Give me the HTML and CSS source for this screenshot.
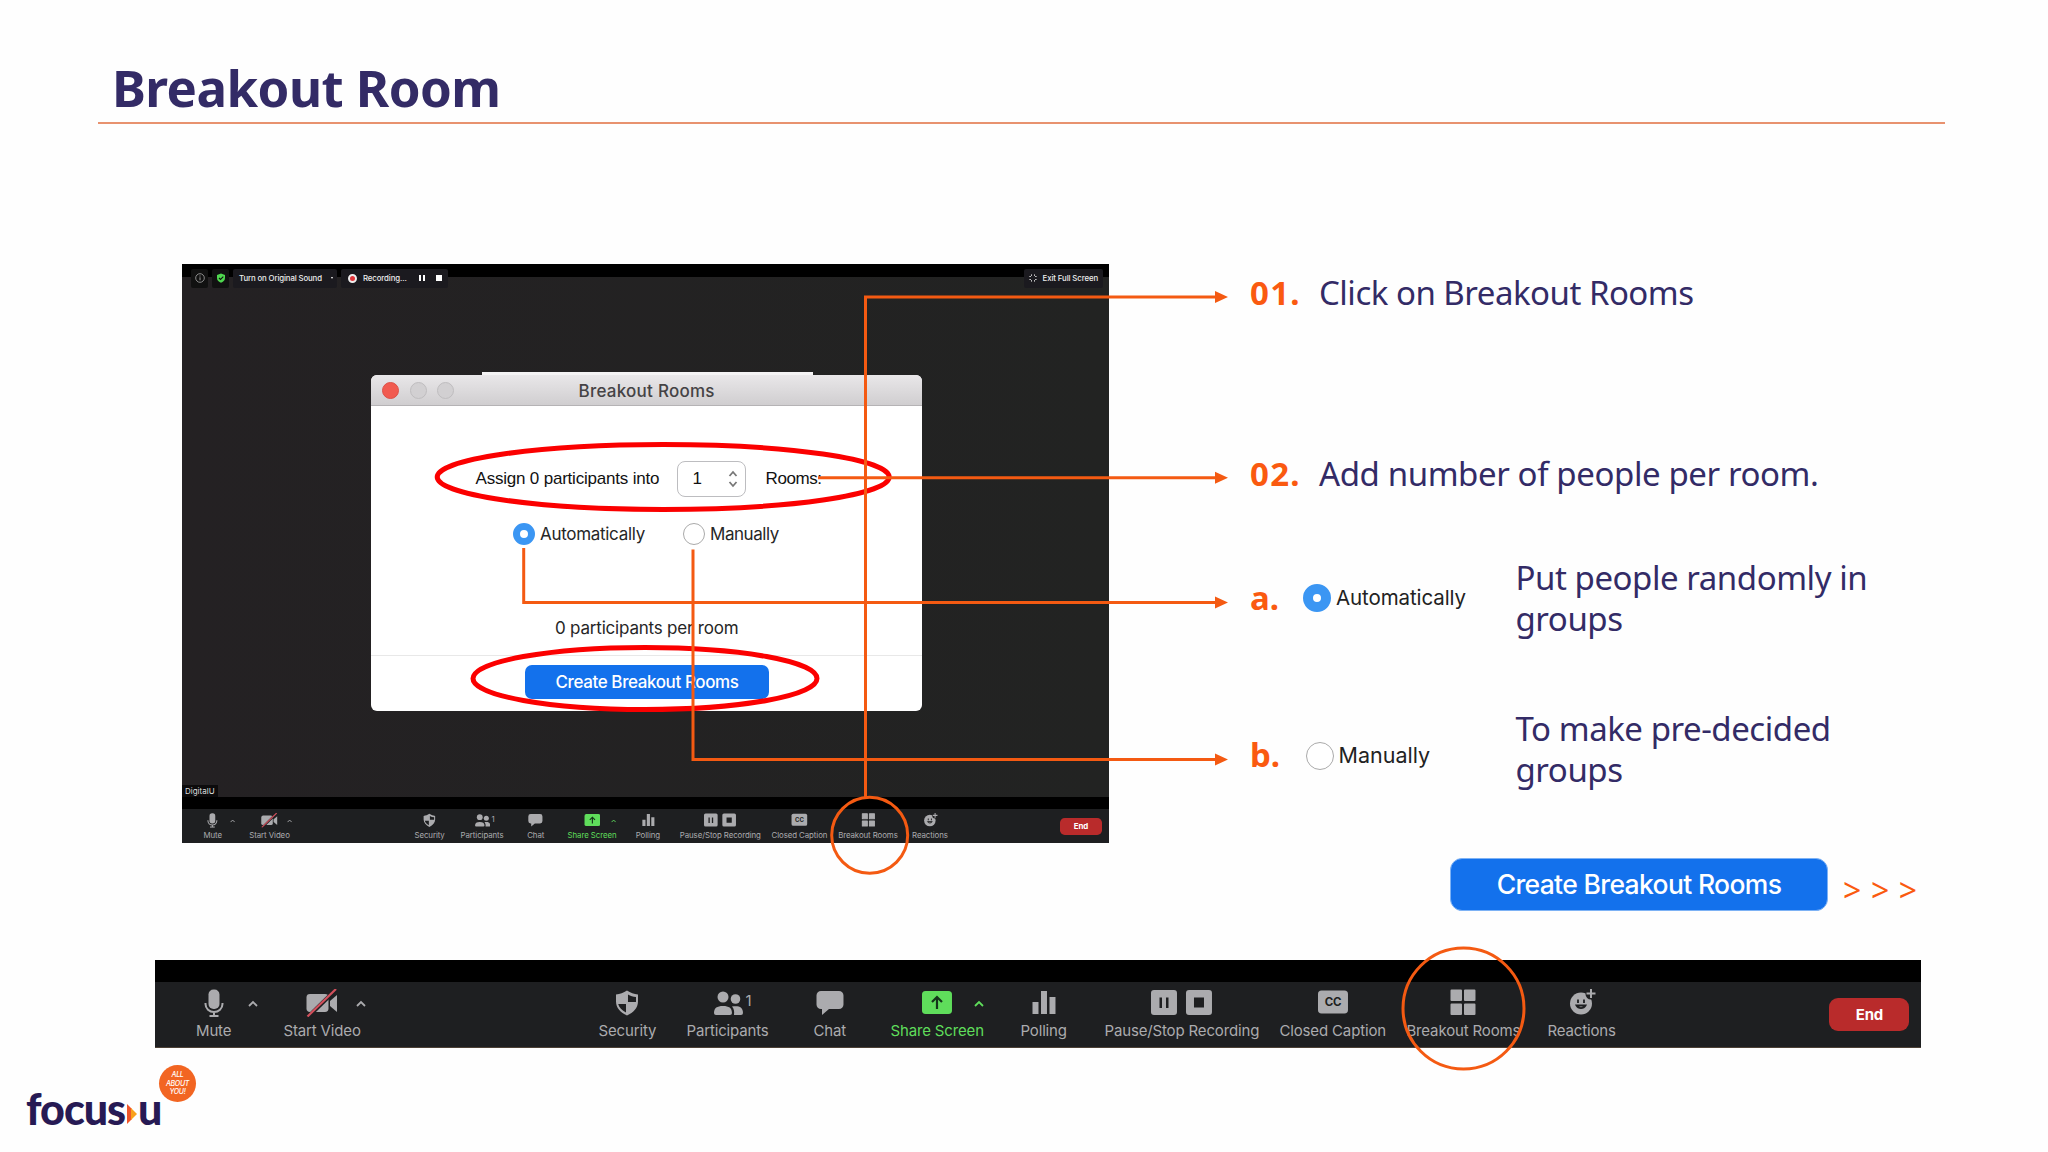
FILE: index.html
```
<!DOCTYPE html>
<html lang="en">
<head>
  <meta charset="UTF-8" />
  <title>Breakout Room</title>
  <link rel="stylesheet" href="styles.css">
</head>
<body>

<!-- Icon set shared by both toolbars -->
<svg class="icon-defs">
  <symbol id="mic" viewBox="0 0 32 28">
    <rect x="10.5" y="0.5" width="11" height="19.5" rx="5" fill="currentColor"/>
    <path d="M7.5 14v1a8.5 8 0 0 0 17 0v-1M16 23v4M11.5 27h9" fill="none" stroke="currentColor" stroke-width="2"/>
  </symbol>
  <symbol id="video" viewBox="0 0 32 28">
    <rect x="0.5" y="5" width="22" height="18" rx="3.5" fill="currentColor"/>
    <path d="M24 12l7-6v17l-7-6z" fill="currentColor"/>
    <path d="M2 28L30.5 0" stroke="#1e1f21" stroke-width="4"/>
    <path d="M1.5 27.5L30 0" stroke="#d2505c" stroke-width="2.2"/>
  </symbol>
  <symbol id="shield" viewBox="0 0 32 28">
    <path d="M16 1.5c3.5 2.5 7 3.5 11 4v7c0 6.5-4.5 11-11 14-6.5-3-11-7.5-11-14v-7c4-.5 7.500-1.5 11-4z" fill="currentColor"/>
    <path d="M17 5.500c2.500 1.500 5 2.200 8 2.600V13h-8zM15 15v8.500c-4-2-7-5-7.800-8.500z" fill="#1e1f21"/>
  </symbol>
  <symbol id="people" viewBox="0 0 32 28">
    <circle cx="11" cy="8" r="5.500" fill="currentColor"/>
    <circle cx="23.500" cy="10" r="4.800" fill="currentColor"/>
    <path d="M2 24c0-5 3-7 9-7s9 2 9 7q0 2-2 2H4Q2 26 2 24zM20 17.500c7-1 11 .5 11 6.500q0 2-2 2h-7c.5-4 0-6-2-8.500z" fill="currentColor"/>
  </symbol>
  <symbol id="chat" viewBox="0 0 32 28">
    <path d="M7 2h18a4.500 4.500 0 0 1 4.500 4.500v9A4.500 4.500 0 0 1 25 20H15l-7 6v-6H7a4.500 4.500 0 0 1-4.500-4.500v-9A4.500 4.500 0 0 1 7 2z" fill="currentColor"/>
  </symbol>
  <symbol id="share" viewBox="0 0 32 28">
    <rect x="1" y="2" width="30" height="23" rx="3.500" fill="#5fdd5b"/>
    <path d="M16 20V8M11 13l5-5 5 5" fill="none" stroke="#14351a" stroke-width="2.200"/>
  </symbol>
  <symbol id="bars" viewBox="0 0 32 28">
    <path d="M4.500 13h6v12h-6zM13 2h6v23h-6zM21.500 8h6v17h-6z" fill="currentColor"/>
  </symbol>
  <symbol id="record" viewBox="0 0 62 28">
    <rect x="0" y="1" width="26" height="25" rx="3" fill="currentColor"/>
    <rect x="35" y="1" width="26" height="25" rx="3" fill="currentColor"/>
    <path d="M8.500 8.500h2.500v10.500H8.500zM15 8.500h2.500v10.500H15zM43 8.500h10v10H43z" fill="#1e1f21"/>
  </symbol>
  <symbol id="cc" viewBox="0 0 32 28">
    <rect x="1" y="1.500" width="30" height="23" rx="3.500" fill="currentColor"/>
    <text x="16" y="17.500" text-anchor="middle" class="cc-text">CC</text>
  </symbol>
  <symbol id="grid" viewBox="0 0 32 28">
    <path d="M4.500 1.500h9.500v9.500h-9.500zM18 1.500h9.500v9.500H18zM4.500 15.500h9.500v9.500h-9.500zM18 15.500h9.500v9.500H18z" fill="currentColor" stroke="currentColor" stroke-width="2" stroke-linejoin="round"/>
  </symbol>
  <symbol id="smile" viewBox="0 0 32 28">
    <circle cx="15" cy="14.500" r="11" fill="currentColor"/>
    <circle cx="25" cy="5" r="5.500" fill="#1e1f21"/>
    <path d="M25 0v9M20.500 4.500h9" stroke="currentColor" stroke-width="2"/>
    <path d="M12 10.500v3.500M18 10.500v3.500M10.500 16.500a5 4.500 0 0 0 9 0z" fill="none" stroke="#1e1f21" stroke-width="1.800"/>
  </symbol>
  <symbol id="caret" viewBox="0 0 10 7">
    <path d="M1 6l4-4 4 4" fill="none" stroke="currentColor" stroke-width="1.800"/>
  </symbol>
</svg>

<div class="slide">
  <header class="title-bar">
    <h1>Breakout Room</h1>
  </header>

  <main class="content">
    <section class="screen">
      <div class="screen-top">
        <span class="chip chip-icon">
          <svg viewBox="0 0 10 10"><circle cx="5" cy="5" r="4.300" fill="none" stroke="#aaa" stroke-width=".8"/><path d="M5 4.300v3M5 2.500v1" stroke="#aaa" stroke-width=".9"/></svg>
        </span>
        <span class="chip chip-icon">
          <svg viewBox="0 0 10 10"><path d="M5 .5l4 1.400v3C9 7.300 7 9 5 9.700 3 9 1 7.300 1 4.900v-3z" fill="#4fd84f"/><path d="M3 5l1.500 1.500L7.300 3.700" fill="none" stroke="#111" stroke-width="1.100"/></svg>
        </span>
        <span class="chip chip-sound">Turn on Original Sound <i class="drop"></i></span>
        <span class="chip chip-rec"><i class="rec-dot"></i> Recording... <i class="pause"></i><i class="stop"></i></span>
        <span class="chip exit">
          <svg viewBox="0 0 8 8"><path d="M.3 2.500h1.700M2.500 .3v1.700M6 2.500h1.700M5.500 .3v1.700M.3 5.500h1.700M2.500 6v1.700M6 5.500h1.700M5.500 6v1.700" fill="none" stroke="#ccc" stroke-width=".9"/></svg>
          Exit Full Screen
        </span>
      </div>

      <div class="stage">
        <div class="dialog">
          <div class="dialog-bar">
            <span class="light red"></span><span class="light"></span><span class="light"></span>
            <span class="dialog-title">Breakout Rooms</span>
          </div>
          <div class="assign">
            <span class="assign-text">Assign 0 participants into</span>
            <span class="stepper">1
              <svg viewBox="0 0 10 18"><path d="M1.500 6L5 2l3.500 4M1.500 12L5 16l3.500-4" fill="none" stroke="#777" stroke-width="1.800"/></svg>
            </span>
            <span class="rooms-text">Rooms:</span>
          </div>
          <div class="choices">
            <span class="radio on"></span><span class="choice-auto">Automatically</span>
            <span class="radio"></span><span class="choice-manual">Manually</span>
          </div>
          <div class="per-room">0 participants per room</div>
          <div class="dialog-foot">
            <div class="create">Create Breakout Rooms</div>
          </div>
        </div>
        <span class="name-tag">DigitalU</span>
      </div>

      <div class="toolbar small">
        <div class="tool"><svg class="icon"><use href="#mic"/></svg>Mute<svg class="caret"><use href="#caret"/></svg></div>
        <div class="tool"><svg class="icon"><use href="#video"/></svg>Start Video<svg class="caret"><use href="#caret"/></svg></div>
        <div class="tool"><svg class="icon"><use href="#shield"/></svg>Security</div>
        <div class="tool"><svg class="icon"><use href="#people"/></svg>Participants<span class="count">1</span></div>
        <div class="tool"><svg class="icon"><use href="#chat"/></svg>Chat</div>
        <div class="tool green"><svg class="icon"><use href="#share"/></svg>Share Screen<svg class="caret"><use href="#caret"/></svg></div>
        <div class="tool"><svg class="icon"><use href="#bars"/></svg>Polling</div>
        <div class="tool"><svg class="icon wide"><use href="#record"/></svg>Pause/Stop Recording</div>
        <div class="tool"><svg class="icon"><use href="#cc"/></svg>Closed Caption</div>
        <div class="tool"><svg class="icon"><use href="#grid"/></svg>Breakout Rooms</div>
        <div class="tool"><svg class="icon"><use href="#smile"/></svg>Reactions</div>
        <div class="end">End</div>
      </div>
    </section>

    <section class="steps">
      <div class="step first"><b>01.</b><span class="click">Click on Breakout Rooms</span></div>
      <div class="step second"><b>02.</b><span class="add">Add number of people per room.</span></div>
      <div class="option opt-a">
        <b>a.</b>
        <div class="option-pick"><span class="radio on"></span>Automatically</div>
        <p>Put people randomly in groups</p>
      </div>
      <div class="option opt-b">
        <b>b.</b>
        <div class="option-pick"><span class="radio"></span>Manually</div>
        <p>To make pre-decided groups</p>
      </div>
      <div class="finish">
        <div class="create-big">Create Breakout Rooms</div>
        <span class="more">&gt; &gt; &gt;</span>
      </div>
    </section>
  </main>

  <div class="toolbar large">
    <div class="tool"><svg class="icon"><use href="#mic"/></svg>Mute<svg class="caret"><use href="#caret"/></svg></div>
    <div class="tool"><svg class="icon"><use href="#video"/></svg>Start Video<svg class="caret"><use href="#caret"/></svg></div>
    <div class="tool"><svg class="icon"><use href="#shield"/></svg>Security</div>
    <div class="tool"><svg class="icon"><use href="#people"/></svg>Participants<span class="count">1</span></div>
    <div class="tool"><svg class="icon"><use href="#chat"/></svg>Chat</div>
    <div class="tool green"><svg class="icon"><use href="#share"/></svg>Share Screen<svg class="caret"><use href="#caret"/></svg></div>
    <div class="tool"><svg class="icon"><use href="#bars"/></svg>Polling</div>
    <div class="tool"><svg class="icon wide"><use href="#record"/></svg>Pause/Stop Recording</div>
    <div class="tool"><svg class="icon"><use href="#cc"/></svg>Closed Caption</div>
    <div class="tool"><svg class="icon"><use href="#grid"/></svg>Breakout Rooms</div>
    <div class="tool"><svg class="icon"><use href="#smile"/></svg>Reactions</div>
    <div class="end">End</div>
  </div>

  <footer class="logo">
    <span>focus</span>
    <svg class="play" viewBox="0 0 10 20"><path d="M0 0l5 5v10l-5 5z" fill="#f0562a"/><path d="M4 4l6 6-6 6z" fill="#f9a11b"/></svg>
    <span>u</span>
    <div class="badge">ALL<br>ABOUT<br>YOU!</div>
  </footer>

  <!-- Callout arrows, rings and circles drawn over the slide -->
  <svg class="callouts" viewBox="0 0 2048 1152">
    <g fill="none" stroke="#fb0000" stroke-width="5">
      <ellipse cx="663.200" cy="477" rx="226" ry="32.500"/>
      <ellipse cx="645" cy="678.500" rx="172" ry="31"/>
    </g>
    <g fill="none" stroke="#f45a12" stroke-width="3">
      <path d="M865.500 797V297H1217"/>
      <path d="M818 477.700H1217"/>
      <path d="M523.700 548V602.500H1217"/>
      <path d="M693 549.500V759.500H1217"/>
      <circle cx="869.700" cy="835.300" r="38"/>
      <circle cx="1463.500" cy="1008.500" r="60.500"/>
    </g>
    <path fill="#f45a12" d="M1215 291l13 6-13 6zM1215 471.700l13 6-13 6zM1215 596.500l13 6-13 6zM1215 753.500l13 6-13 6z"/>
  </svg>
</div>

</body>
</html>
```
FILE: styles.css
```
* {
  box-sizing: border-box;
}

html, body {
  margin: 0;
  padding: 0;
  overflow: hidden;
  background: #fefefe;
}

.icon-defs {
  display: none;
}

.slide {
  position: relative;
  display: flex;
  flex-direction: column;
  width: 2048px;
  height: 1152px;
  font-family: "Noto Sans", "Open Sans", sans-serif;
  color: #332b66;
}

.title-bar {
  width: 1847px;
  height: 124px;
  margin-left: 98px;
  padding: 53px 0 0 14px;
  border-bottom: 2px solid #e8926f;
}

h1 {
  margin: 0;
  font-size: 51px;
  line-height: 68px;
  letter-spacing: -0.55px;
}

.content {
  display: flex;
  align-items: flex-start;
  height: 647px;
  margin: 140px 0 49px 182px;
}

/* ---- Meeting screenshot ---- */
.screen {
  display: flex;
  flex-direction: column;
  width: 927px;
  height: 579px;
  background: linear-gradient(90deg, #242123, #222322);
  font-family: Inter, "Liberation Sans", sans-serif;
}

.screen-top {
  display: flex;
  align-items: center;
  gap: 4px;
  height: 24px;
  padding: 4px 6px 0 9px;
  background: linear-gradient(#000 13px, transparent 13px);
  color: #eee;
  font-size: 7.8px;
  font-weight: 500;
  white-space: nowrap;
}

.chip {
  display: flex;
  align-items: center;
  height: 19px;
  background: #1b1a1f;
  border-radius: 2px;
}

.chip-icon {
  width: 17px;
  justify-content: center;
  background: #111;
}

.chip-icon svg {
  width: 10px;
  height: 10px;
}

.chip-sound {
  width: 104px;
  padding: 0 4px 0 6px;
  justify-content: space-between;
  letter-spacing: -0.12px;
}

.drop {
  border: 1.5px solid transparent;
  border-top: 2px solid #fff;
}

.chip-rec {
  width: 107px;
  padding-left: 7px;
  letter-spacing: -0.1px;
}

.rec-dot {
  width: 9px;
  height: 9px;
  margin-right: 6px;
  background: #e2353a;
  border: 2.5px solid #eee;
  border-radius: 50%;
}

.pause {
  width: 6px;
  height: 6px;
  margin: 0 11px 0 12px;
  border: solid #fff;
  border-width: 0 2px;
}

.stop {
  width: 6px;
  height: 6px;
  background: #fff;
}

.exit {
  gap: 6px;
  margin-left: auto;
  padding: 0 5px;
  letter-spacing: -0.1px;
}

.exit svg {
  width: 8px;
  height: 8px;
}

.stage {
  display: flex;
  flex-direction: column;
  align-items: flex-start;
  justify-content: space-between;
  height: 509px;
  padding-top: 84px;
}

.dialog {
  position: relative;
  width: 551px;
  height: 336px;
  margin: 3px 0 0 189px;
  background: #fff;
  border-radius: 6px;
  color: #262626;
  font-size: 17px;
}

/* Edge of the window behind the dialog */
.dialog::before {
  content: "";
  position: absolute;
  top: -3px;
  left: 111px;
  width: 331px;
  height: 3px;
  background: #f4f3f4;
}

.dialog-bar {
  display: flex;
  align-items: center;
  gap: 10.5px;
  height: 31px;
  padding-left: 11px;
  background: linear-gradient(#e9e7e9, #d0ced0);
  border-bottom: 1px solid #b5b3b5;
  border-radius: 6px 6px 0 0;
}

.light {
  width: 17px;
  height: 17px;
  background: #d2d0d2;
  border: 1px solid #bfbdbf;
  border-radius: 50%;
}

.light.red {
  background: #f15b50;
  border-color: #dd5148;
}

.dialog-title {
  margin-left: 114px;
  padding-top: 1px;
  color: #454345;
  font-weight: 500;
  letter-spacing: 0.25px;
}

.assign {
  display: flex;
  align-items: center;
  height: 36px;
  margin: 55px 0 0 104.5px;
  font-family: "Liberation Sans", Arial, sans-serif;
  color: #111;
  white-space: nowrap;
}

.assign-text {
  width: 201px;
  letter-spacing: -0.2px;
}

.stepper {
  display: flex;
  align-items: center;
  justify-content: space-between;
  width: 69px;
  height: 36px;
  margin-right: 20px;
  padding: 0 7px 0 15px;
  border: 1.5px solid #bdbdc0;
  border-radius: 8px;
}

.stepper svg {
  width: 10px;
  height: 18px;
}

.rooms-text {
  letter-spacing: -0.4px;
}

.choices {
  display: flex;
  align-items: center;
  height: 24px;
  margin: 25px 0 0 142px;
  letter-spacing: -0.3px;
}

.radio {
  width: 22px;
  height: 22px;
  margin-right: 5px;
  background: #fff;
  border: 1.5px solid #aaa;
  border-radius: 50%;
}

.radio.on {
  border: 7.5px solid #3b96f3;
}

.choice-auto {
  width: 143px;
}

.choice-manual {
  letter-spacing: -0.45px;
}

.per-room {
  margin-top: 71px;
  height: 22px;
  line-height: 22px;
  padding-left: 184px;
  letter-spacing: -0.2px;
}

.dialog-foot {
  display: flex;
  height: 54px;
  margin-top: 16px;
  padding: 9px 0 0 154px;
  border-top: 1px solid #e8e8e8;
}

.create {
  width: 244px;
  height: 34px;
  background: #1371ec;
  border-radius: 7px;
  color: #fff;
  font-weight: 500;
  line-height: 34px;
  text-align: center;
  letter-spacing: -0.4px;
}

.name-tag {
  margin-bottom: -1px;
  padding: 1px 3px;
  background: #0c0b0c;
  color: #ddd;
  font-size: 8px;
  line-height: 11px;
}

/* ---- Toolbar, sized in em so it works at both scales ---- */
.toolbar {
  display: grid;
  grid-template-columns: 5.833em 21em 5.867em 8.467em 5.133em 8.667em 5.6em 11.667em 8.467em 9.4em 18.8em 5.333em;
  justify-items: start;
  align-items: start;
  width: 117.733em;
  height: 5.867em;
  padding: 1.933em 0 0 2.733em;
  background: linear-gradient(#000 1.467em, #1e1f21 1.467em);
  font-family: Inter, "Liberation Sans", sans-serif;
  color: #ababae;
  letter-spacing: -0.01em;
  white-space: nowrap;
}

.toolbar.large {
  flex-shrink: 0;
  margin-left: 155px;
  font-size: 15px;
  border-bottom: 1px solid #4d4136;
}

.toolbar.small {
  width: 927px;
  height: 46px;
  padding: 16px 0 0 21.4px;
  font-size: 7.866px;
}

.tool {
  position: relative;
  display: flex;
  flex-direction: column;
  align-items: center;
  gap: 0.36em;
  line-height: 1.2;
}

.tool.green {
  color: #5fdd5b;
}

.icon {
  width: 2.133em;
  height: 1.867em;
}

.icon.wide {
  width: 4.133em;
}

.cc-text {
  font: 700 11.5px Inter, sans-serif;
  fill: #1e1f21;
}

.caret {
  position: absolute;
  top: 0.75em;
  left: calc(50% + 2.267em);
  width: 0.667em;
  height: 0.467em;
}

.green .caret {
  left: calc(50% + 2.45em);
}

.count {
  position: absolute;
  top: 0.2em;
  left: calc(50% + 1.2em);
}

.end {
  width: 5.333em;
  height: 2.2em;
  margin-top: 0.6em;
  background: #b92b2b;
  border-radius: 0.6em;
  color: #fff;
  font-weight: 700;
  line-height: 2.2em;
  text-align: center;
}

/* ---- Steps ---- */
.steps {
  display: flex;
  flex-direction: column;
  width: 700px;
  margin-left: 141px;
  padding-top: 7.5px;
  font-size: 33px;
  line-height: 41.5px;
}

.steps b {
  color: #fa5a10;
}

.step {
  display: flex;
  white-space: nowrap;
}

.step b {
  width: 69px;
  letter-spacing: 1.3px;
}

.click {
  letter-spacing: -0.5px;
}

.add {
  letter-spacing: -0.4px;
}

.second {
  margin-top: 139.5px;
}

.option {
  display: grid;
  grid-template-columns: 53px 212.5px 380px;
  align-items: center;
}

.option p {
  margin: 0;
  letter-spacing: -0.45px;
}

.opt-a {
  margin-top: 62.5px;
}

.opt-b {
  margin-top: 68px;
}

.opt-b b {
  padding-top: 12px;
}

.option-pick {
  display: flex;
  align-items: center;
  font-family: Inter, "Liberation Sans", sans-serif;
  font-size: 20.5px;
  letter-spacing: -0.1px;
  color: #222;
}

.opt-a .option-pick {
  padding-bottom: 1px;
}

.option-pick .radio {
  width: 28px;
  height: 28px;
  margin-right: 5px;
}

.option-pick .radio.on {
  border-width: 10px;
}

.opt-b .option-pick {
  padding: 14px 0 0 2.5px;
  font-size: 21.5px;
  letter-spacing: 0;
}

.finish {
  display: flex;
  align-items: center;
  margin: 67px 0 0 200px;
}

.create-big {
  width: 378px;
  height: 53px;
  background: #1371ec;
  border: 1px solid #7db2f5;
  border-radius: 12px;
  color: #fff;
  font-family: Inter, "Liberation Sans", sans-serif;
  font-size: 26.5px;
  font-weight: 500;
  line-height: 51px;
  text-align: center;
  letter-spacing: -0.65px;
}

.more {
  margin-left: 15px;
  padding-top: 11px;
  color: #fa5a10;
  font-size: 32px;
  word-spacing: 1.3px;
}

/* ---- Logo ---- */
.logo {
  position: relative;
  display: flex;
  align-items: center;
  width: 180px;
  height: 54px;
  margin: 34px 0 0 26px;
  color: #271a54;
  font: 900 43px/54px Lato, "Open Sans", sans-serif;
  letter-spacing: -1px;
}

.play {
  width: 10px;
  height: 20px;
  margin: 10px 1px 0 2px;
}

.badge {
  position: absolute;
  top: -17px;
  left: 133px;
  width: 37px;
  height: 37px;
  padding-top: 6px;
  background: #f26522;
  border-radius: 50%;
  color: #fff;
  font: italic 500 7px/8.5px Inter, sans-serif;
  letter-spacing: -0.3px;
  text-align: center;
}

.callouts {
  position: absolute;
  top: 0;
  left: 0;
  width: 2048px;
  height: 1152px;
}
```
